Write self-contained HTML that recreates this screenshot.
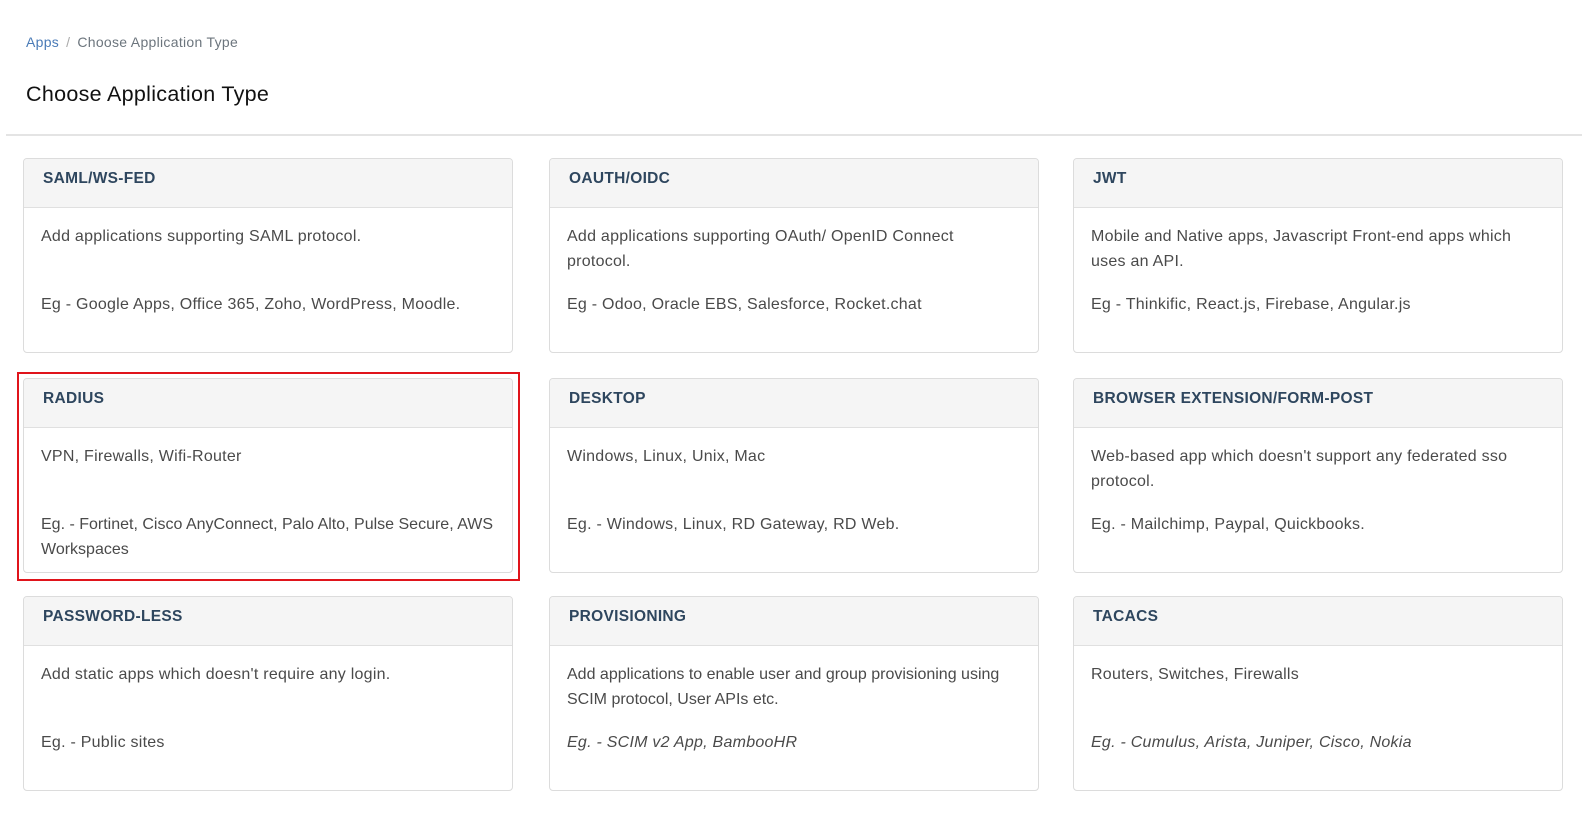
<!DOCTYPE html>
<html><head><meta charset="utf-8"><style>
*{box-sizing:border-box;margin:0;padding:0}
body{width:1593px;height:817px;background:#fff;font-family:"Liberation Sans",sans-serif;position:relative;overflow:hidden}
.bc{position:absolute;left:26px;top:34px;font-size:14px;color:#6c757d;letter-spacing:.3px}
.bc a{color:#4a7bb7;text-decoration:none}
.bc span{color:#aaa;margin:0 7px}
h1{position:absolute;left:26px;top:82px;font-size:21.5px;font-weight:normal;color:#111;letter-spacing:.3px}
.hr{position:absolute;left:6px;top:134px;width:1576px;height:2px;background:#e4e4e4}
.card{position:absolute;width:490px;height:195px;border:1px solid #dcdcdc;border-radius:4px;background:#fff;overflow:hidden}
.hd{height:49px;background:#f5f5f5;border-bottom:1px solid #e0e0e0;padding:11px 19px;font-weight:bold;font-size:15.5px;color:#2e465e;letter-spacing:.3px}
.bd{padding:17px 17px;font-size:16px;color:#4a4a4a;line-height:24.5px;letter-spacing:.25px}
.bd p{height:68px}
.bd p.eg{height:auto}
i{font-style:italic}
.red{position:absolute;left:17px;top:372px;width:503px;height:209px;border:2px solid #e0141b}
</style></head><body>
<div class="bc"><a>Apps</a><span>/</span>Choose Application Type</div>
<h1>Choose Application Type</h1>
<div class="hr"></div>

<div class="card" style="left:23px;top:158px"><div class="hd">SAML/WS-FED</div><div class="bd"><p>Add applications supporting SAML protocol.</p><p class="eg">Eg - Google Apps, Office 365, Zoho, WordPress, Moodle.</p></div></div>
<div class="card" style="left:549px;top:158px"><div class="hd">OAUTH/OIDC</div><div class="bd"><p>Add applications supporting OAuth/ OpenID Connect<br>protocol.</p><p class="eg">Eg - Odoo, Oracle EBS, Salesforce, Rocket.chat</p></div></div>
<div class="card" style="left:1073px;top:158px"><div class="hd">JWT</div><div class="bd"><p>Mobile and Native apps, Javascript Front-end apps which<br>uses an API.</p><p class="eg">Eg - Thinkific, React.js, Firebase, Angular.js</p></div></div>

<div class="card" style="left:23px;top:378px"><div class="hd">RADIUS</div><div class="bd"><p>VPN, Firewalls, Wifi-Router</p><p class="eg" style="white-space:nowrap;letter-spacing:0">Eg. - Fortinet, Cisco AnyConnect, Palo Alto, Pulse Secure, AWS<br>Workspaces</p></div></div>
<div class="card" style="left:549px;top:378px"><div class="hd">DESKTOP</div><div class="bd"><p>Windows, Linux, Unix, Mac</p><p class="eg">Eg. - Windows, Linux, RD Gateway, RD Web.</p></div></div>
<div class="card" style="left:1073px;top:378px"><div class="hd">BROWSER EXTENSION/FORM-POST</div><div class="bd"><p>Web-based app which doesn't support any federated sso<br>protocol.</p><p class="eg">Eg. - Mailchimp, Paypal, Quickbooks.</p></div></div>

<div class="card" style="left:23px;top:596px"><div class="hd">PASSWORD-LESS</div><div class="bd"><p>Add static apps which doesn't require any login.</p><p class="eg">Eg. - Public sites</p></div></div>
<div class="card" style="left:549px;top:596px"><div class="hd">PROVISIONING</div><div class="bd"><p style="white-space:nowrap;letter-spacing:0">Add applications to enable user and group provisioning using<br>SCIM protocol, User APIs etc.</p><p class="eg"><i>Eg. - SCIM v2 App, BambooHR</i></p></div></div>
<div class="card" style="left:1073px;top:596px"><div class="hd">TACACS</div><div class="bd"><p>Routers, Switches, Firewalls</p><p class="eg"><i>Eg. - Cumulus, Arista, Juniper, Cisco, Nokia</i></p></div></div>

<div class="red"></div>
</body></html>
